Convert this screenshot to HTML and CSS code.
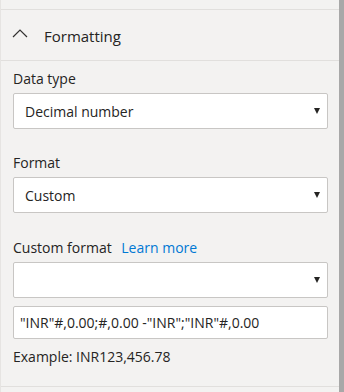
FILE: index.html
```html
<!DOCTYPE html>
<html lang="en">
<head>
    <meta charset="UTF-8">
    <meta name="viewport" content="width=device-width, initial-scale=1.0">
    <title>Formatting</title>
    <link rel="stylesheet" href="styles.css">
</head>
<body>
    <div class="pane">
        <div class="panel">
            <div class="top-strip"></div>

            <div class="section-header">
                <svg class="chevron" width="16" height="9" viewBox="0 0 16 9">
                    <polyline points="1,8 8,1 15,8" fill="none" stroke="#323130" stroke-width="1.2"/>
                </svg>
                <span class="section-title">Formatting</span>
            </div>

            <div class="section-body">
                <div class="field">
                    <label class="field-label">Data type</label>
                    <div class="dropdown">
                        <span class="dropdown-value">Decimal number</span>
                        <span class="caret"></span>
                    </div>
                </div>

                <div class="field">
                    <label class="field-label">Format</label>
                    <div class="dropdown">
                        <span class="dropdown-value">Custom</span>
                        <span class="caret"></span>
                    </div>
                </div>

                <div class="field field-custom">
                    <label class="field-label">Custom format <a href="#" class="learn-more">Learn more</a></label>
                    <div class="dropdown">
                        <span class="dropdown-value"></span>
                        <span class="caret"></span>
                    </div>
                    <div class="text-input">"INR"#,0.00;#,0.00 -"INR";"INR"#,0.00</div>
                    <p class="example">Example: INR123,456.78</p>
                </div>
            </div>
        </div>
        <div class="scrollbar"></div>
    </div>
</body>
</html>
```

FILE: styles.css
```css
body {
    font-family: "Open Sans", "Noto Sans", sans-serif;
    margin: 0;
    padding: 0;
    background-color: #f3f2f1;
    color: #252423;
}
.pane {
    display: flex;
    height: 392px;
    overflow: hidden;
}
.panel {
    width: 338px;
    border-left: 1px solid #e6e4e2;
    display: flex;
    flex-direction: column;
}
.scrollbar {
    width: 5px;
    background-color: #a8a8a8;
}
.top-strip {
    height: 9px;
    border-bottom: 1px solid #e1dfdd;
}
.section-header {
    height: 50px;
    border-bottom: 1px solid #e1dfdd;
    display: flex;
    align-items: center;
    padding-left: 11px;
}
.chevron {
    display: block;
    margin-top: -4px;
}
.section-title {
    font-size: 15px;
    margin-left: 16px;
    padding-top: 2px;
}
.section-body {
    padding: 0 11px 0 12px;
    height: 325px;
    border-bottom: 1px solid #e1dfdd;
}
.field {
    margin-top: 8px;
}
.field + .field {
    margin-top: 24px;
}
.field + .field-custom {
    margin-top: 25px;
}
.field-label {
    display: block;
    font-size: 14px;
    line-height: 20px;
    margin-bottom: 4px;
}
.learn-more {
    color: #0078d4;
    text-decoration: none;
    margin-left: 6px;
}
.dropdown {
    height: 34px;
    background-color: #fff;
    border: 1px solid #c8c6c4;
    border-radius: 2px;
    display: flex;
    align-items: center;
    justify-content: space-between;
    padding: 0 7px 0 11px;
}
.dropdown-value {
    font-size: 14px;
}
.caret {
    width: 0;
    height: 0;
    border-left: 3.5px solid transparent;
    border-right: 3.5px solid transparent;
    border-top: 6px solid #252423;
}
.text-input {
    margin-top: 8px;
    height: 31px;
    background-color: #fff;
    border: 1px solid #c8c6c4;
    border-radius: 2px;
    padding: 0 6px;
    font-size: 14px;
    line-height: 31px;
    white-space: nowrap;
}
.example {
    margin: 8px 0 0;
    font-size: 14px;
    line-height: 20px;
}
```
